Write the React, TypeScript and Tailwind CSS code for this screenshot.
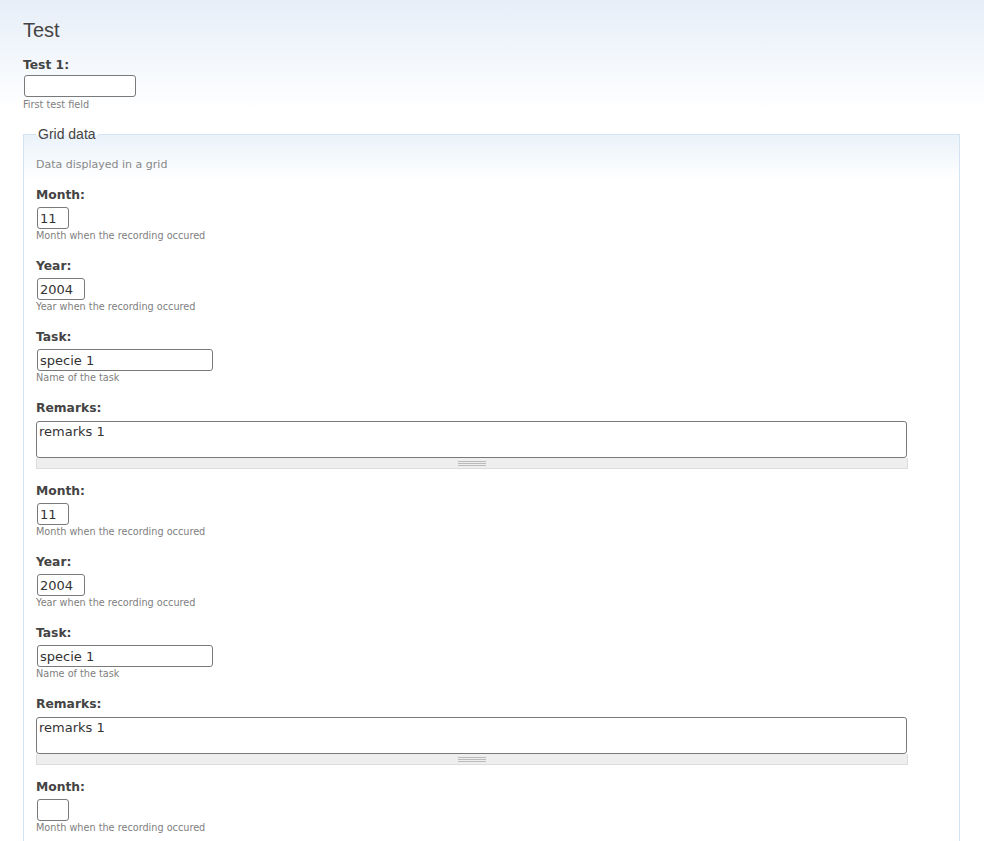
import React from 'react';

const sans = "font-['DejaVu_Sans',sans-serif]";

type FieldProps = {
  label: string;
  value?: string;
  width: string;
  description?: string;
  first?: boolean;
};

const TextField = ({ label, value = '', width, description, first }: FieldProps) => (
  <div className={first ? 'pt-[2px] mb-[15px]' : 'mb-[16px]'}>
    <label
      className={`block h-[16px] leading-[16px] text-[12.3px] font-bold text-[#444] ${first ? 'mb-[2px]' : 'mb-[4px]'} ${sans}`}
    >
      {label}
    </label>
    <input
      readOnly
      defaultValue={value}
      className={`block ml-px h-[22px] ${width} border border-[#7a7a7a] rounded-[3px] px-[2px] text-[13px] leading-[16px] text-[#333] bg-white outline-none ${sans}`}
    />
    {description && (
      <div className={`${first ? 'mt-[2px]' : 'mt-[1px]'} text-[9.7px] leading-[12px] text-[#808080] ${sans}`}>
        {description}
      </div>
    )}
  </div>
);

const RemarksField = ({ value = '' }: { value?: string }) => (
  <div className="mb-[14px]">
    <label className={`block h-[16px] leading-[16px] text-[12.3px] font-bold text-[#444] mb-[5px] ${sans}`}>
      Remarks:
    </label>
    <div className="w-[871px]">
      <textarea
        readOnly
        defaultValue={value}
        className={`block w-full h-[37px] resize-none border border-[#7a7a7a] rounded-[3px] p-[2px] text-[13px] leading-[16px] text-[#333] bg-white outline-none ${sans}`}
      />
      <div className="h-[11px] w-[872px] bg-[#eeeeee] border border-t-0 border-[#dddddd] flex flex-col items-center justify-center gap-[1px]">
        <div className="w-[28px] h-px bg-[#bbbbbb]" />
        <div className="w-[28px] h-px bg-[#bbbbbb]" />
        <div className="w-[28px] h-px bg-[#bbbbbb]" />
      </div>
    </div>
  </div>
);

const GridRow = ({ month, year, task, remarks }: { month: string; year: string; task: string; remarks: string }) => (
  <div>
    <TextField label="Month:" value={month} width="w-[32px]" description="Month when the recording occured" />
    <TextField label="Year:" value={year} width="w-[48px]" description="Year when the recording occured" />
    <TextField label="Task:" value={task} width="w-[176px]" description="Name of the task" />
    <RemarksField value={remarks} />
  </div>
);

export default function App() {
  return (
    <div className="min-h-screen bg-[linear-gradient(180deg,#e6eef8_0px,#ffffff_110px)] pt-[18px] pl-[23px] pr-[24px] pb-8">
      <h1 className="text-[20px] leading-[24px] text-[#444] font-normal mb-[13px] font-['Liberation_Sans',Arial,sans-serif]">
        Test
      </h1>

      <TextField label="Test 1:" width="w-[112px]" description="First test field" first />

      <fieldset className="border border-[#d3e3f3] bg-[linear-gradient(180deg,#eaf2fa_0px,#ffffff_45px)] px-[12px] pb-[12px]">
        <legend className="px-[2px] text-[14px] leading-[16px] text-[#444] font-['Liberation_Sans',Arial,sans-serif]">
          Grid data
        </legend>
        <div className={`pt-[16px] mb-[15px] text-[11px] leading-[14px] text-[#888] ${sans}`}>
          Data displayed in a grid
        </div>
        <GridRow month="11" year="2004" task="specie 1" remarks="remarks 1" />
        <GridRow month="11" year="2004" task="specie 1" remarks="remarks 1" />
        <GridRow month="" year="" task="" remarks="" />
      </fieldset>
    </div>
  );
}
